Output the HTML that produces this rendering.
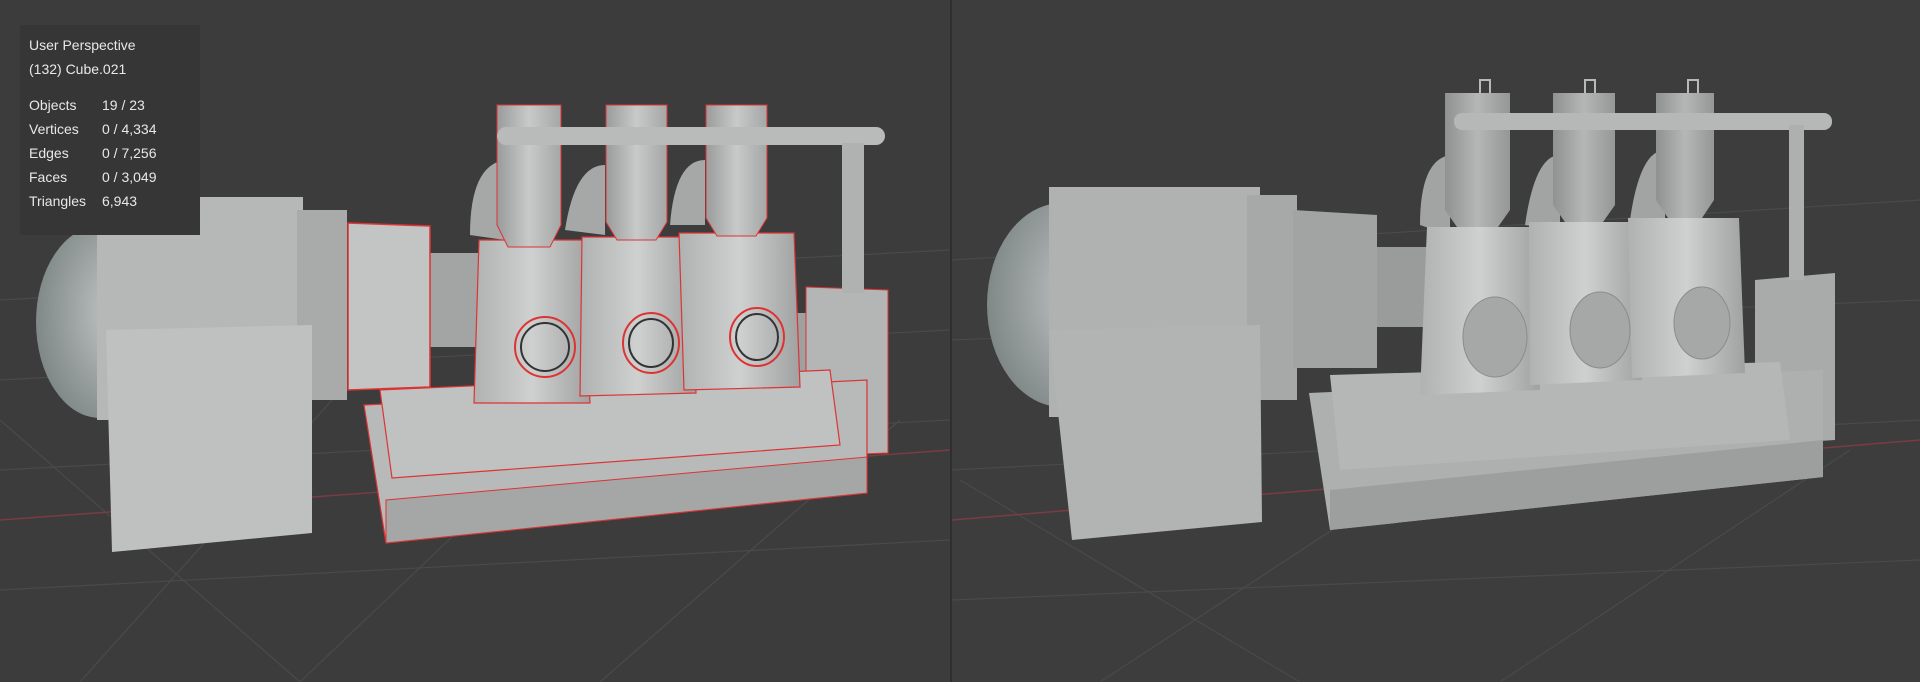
<!DOCTYPE html>
<html><head><style>
html,body{margin:0;padding:0;background:#3d3d3d;width:1920px;height:682px;overflow:hidden;font-family:"Liberation Sans",sans-serif}
svg{position:absolute;left:0;top:0}
.ov{position:absolute;left:20px;top:25px;width:180px;height:210px;background:#363636;color:#e8e8e8;font-size:14px;line-height:24px}
.ov div{padding-left:9px}
.ov span{display:inline-block;width:73px}
</style></head><body>
<svg width="1920" height="682" viewBox="0 0 1920 682">
<defs>
<linearGradient id="g1" x1="0" x2="1"><stop offset="0" stop-color="#9a9c9c"/><stop offset=".5" stop-color="#c8c9c9"/><stop offset="1" stop-color="#a5a6a6"/></linearGradient>
<linearGradient id="g2" x1="0" x2="1"><stop offset="0" stop-color="#b0b1b1"/><stop offset=".5" stop-color="#cfd0d0"/><stop offset="1" stop-color="#a0a1a1"/></linearGradient>
<linearGradient id="g3" x1="0" x2="1"><stop offset="0" stop-color="#909292"/><stop offset=".5" stop-color="#b5b7b7"/><stop offset="1" stop-color="#959797"/></linearGradient>
<radialGradient id="dome" cx=".65" cy=".45" r=".7"><stop offset="0" stop-color="#c4c7c7"/><stop offset="1" stop-color="#7b8383"/></radialGradient>
</defs>
<rect x="0" y="0" width="950" height="682" fill="#3c3c3c"/>
<rect x="952" y="0" width="968" height="682" fill="#3d3d3d"/>
<rect x="950" y="0" width="2" height="682" fill="#2f2f2f"/>
<g stroke="#4a4a4a" stroke-width="1.2" fill="none">
<path d="M0 300 L950 250 M0 380 L950 330 M0 470 L950 420 M0 590 L950 540 M300 682 L700 300 M80 682 L350 380 M600 682 L900 420 M0 420 L300 682"/>
<path d="M952 260 L1920 200 M952 340 L1920 300 M952 470 L1920 420 M952 600 L1920 560 M1100 682 L1500 420 M1500 682 L1850 450 M960 480 L1300 682"/>
</g>
<path d="M0 520 L950 450" stroke="#7a3b44" stroke-width="1.5"/>
<path d="M952 520 L1920 440" stroke="#7a3b44" stroke-width="1.5"/>
<!-- LEFT MACHINE -->
<g>
<ellipse cx="100" cy="322" rx="64" ry="96" fill="url(#dome)"/>
<rect x="97" y="197" width="206" height="223" fill="#b6b8b8"/>
<rect x="297" y="210" width="50" height="190" fill="#a9abab"/>
<polygon points="106,330 312,325 312,533 112,552" fill="#bfc1c1"/>
<rect x="427" y="253" width="76" height="94" fill="#a3a5a5"/>
<polygon points="348,223 430,226 430,387 348,390" fill="#c3c5c5" stroke="#d33" stroke-width="1.5"/>
<rect x="782" y="313" width="54" height="90" fill="#9fa1a1"/>
<polygon points="806,287 888,290 888,453 806,456" fill="#b4b6b6" stroke="#d33" stroke-width="1"/>
<polygon points="364,405 867,380 867,493 386,543" fill="#b8baba" stroke="#d33" stroke-width="1.2"/>
<polygon points="386,500 867,457 867,493 386,543" fill="#a5a7a7" stroke="#d33" stroke-width="1"/>
<polygon points="380,390 830,370 840,445 392,478" fill="#c0c2c2" stroke="#d33" stroke-width="1.2"/>
<path d="M470 235 Q470 165 505 160 L505 240 Z M565 230 Q575 165 605 165 L605 235 Z M670 225 Q675 160 705 160 L705 225Z" fill="#a6a8a8"/>
<polygon points="479,240 582,240 590,403 474,403" fill="url(#g2)" stroke="#d33" stroke-width="1.2"/>
<polygon points="582,237 691,237 696,393 580,396" fill="url(#g2)" stroke="#d33" stroke-width="1.2"/>
<polygon points="679,233 794,233 800,387 684,390" fill="url(#g2)" stroke="#d33" stroke-width="1.2"/>
<path d="M497 105 L561 105 L561 225 L550 247 L508 247 L497 225Z" fill="url(#g1)" stroke="#d33" stroke-width="1"/>
<path d="M606 105 L667 105 L667 222 L656 240 L617 240 L606 222Z" fill="url(#g1)" stroke="#d33" stroke-width="1"/>
<path d="M706 105 L767 105 L767 218 L756 236 L717 236 L706 218Z" fill="url(#g1)" stroke="#d33" stroke-width="1"/>
<rect x="497" y="127" width="388" height="18" rx="9" fill="#b9bbbb"/>
<rect x="842" y="143" width="22" height="150" fill="#b0b2b2"/>
<ellipse cx="545" cy="347" rx="30" ry="30" fill="none" stroke="#d33" stroke-width="2"/><ellipse cx="545" cy="347" rx="24" ry="24" fill="none" stroke="#333" stroke-width="2"/>
<ellipse cx="651" cy="343" rx="28" ry="30" fill="none" stroke="#d33" stroke-width="2"/><ellipse cx="651" cy="343" rx="22" ry="24" fill="none" stroke="#333" stroke-width="2"/>
<ellipse cx="757" cy="337" rx="27" ry="29" fill="none" stroke="#d33" stroke-width="2"/><ellipse cx="757" cy="337" rx="21" ry="23" fill="none" stroke="#333" stroke-width="2"/>
</g>
<!-- RIGHT MACHINE -->
<g>
<ellipse cx="1062" cy="305" rx="75" ry="102" fill="url(#dome)"/>
<rect x="1049" y="187" width="211" height="230" fill="#b0b2b2"/>
<rect x="1247" y="195" width="50" height="205" fill="#a7a9a9"/>
<polygon points="1049,330 1260,325 1262,522 1072,540" fill="#b2b4b4"/>
<rect x="1377" y="247" width="68" height="80" fill="#9a9c9c"/>
<polygon points="1293,210 1377,215 1377,368 1293,368" fill="#a2a4a4"/>
<polygon points="1755,280 1835,273 1835,440 1755,445" fill="#a9abab"/>
<polygon points="1309,393 1823,370 1823,477 1330,530" fill="#aeb0b0"/>
<polygon points="1330,490 1823,440 1823,477 1330,530" fill="#9d9f9f"/>
<polygon points="1330,375 1780,362 1790,440 1340,470" fill="#b5b7b7"/>
<path d="M1420 225 Q1420 160 1450 155 L1450 235Z M1525 225 Q1535 155 1560 155 L1560 230Z M1630 220 Q1640 150 1665 150 L1665 225Z" fill="#a2a4a4"/>
<polygon points="1427,227 1532,227 1540,390 1420,395" fill="url(#g2)"/>
<polygon points="1529,222 1637,222 1642,380 1530,385" fill="url(#g2)"/>
<polygon points="1628,218 1739,218 1745,373 1632,378" fill="url(#g2)"/>
<path d="M1445 93 L1510 93 L1510 210 L1498 227 L1457 227 L1445 210Z" fill="url(#g3)"/>
<path d="M1553 93 L1615 93 L1615 205 L1603 222 L1565 222 L1553 205Z" fill="url(#g3)"/>
<path d="M1656 93 L1714 93 L1714 200 L1702 218 L1668 218 L1656 200Z" fill="url(#g3)"/>
<g fill="none" stroke="#b8baba" stroke-width="2"><path d="M1480 93 V80 H1490 V93 M1585 93 V80 H1595 V93 M1688 93 V80 H1698 V93"/></g>
<rect x="1454" y="113" width="378" height="17" rx="8" fill="#b6b8b8"/>
<rect x="1789" y="125" width="15" height="155" fill="#aeb0b0"/>
<ellipse cx="1495" cy="337" rx="32" ry="40" fill="#a6a8a8" stroke="#8a8b8b"/>
<ellipse cx="1600" cy="330" rx="30" ry="38" fill="#a6a8a8" stroke="#8a8b8b"/>
<ellipse cx="1702" cy="323" rx="28" ry="36" fill="#a6a8a8" stroke="#8a8b8b"/>
</g>
</svg>
<div class="ov">
<div style="margin-top:8px">User Perspective</div>
<div>(132) Cube.021</div>
<div style="margin-top:12px"><span>Objects</span>19 / 23</div>
<div><span>Vertices</span>0 / 4,334</div>
<div><span>Edges</span>0 / 7,256</div>
<div><span>Faces</span>0 / 3,049</div>
<div><span>Triangles</span>6,943</div>
</div>
</body></html>
